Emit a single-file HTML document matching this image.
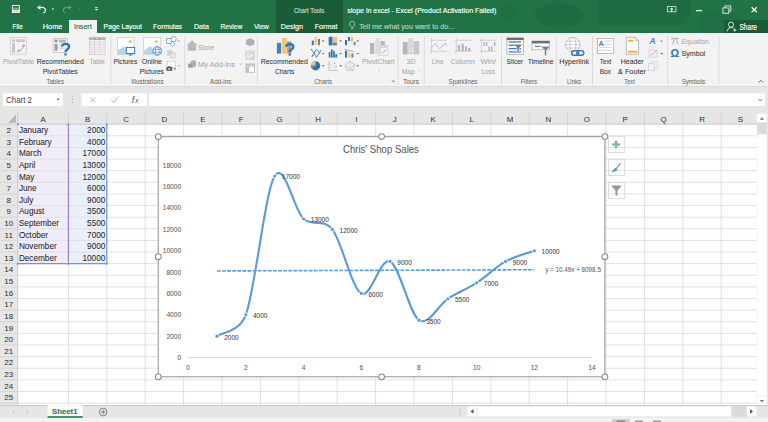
<!DOCTYPE html>
<html><head><meta charset="utf-8"><style>
html,body{margin:0;padding:0;width:768px;height:422px;overflow:hidden;background:#fff}
svg{display:block}
text{font-family:"Liberation Sans",sans-serif}
</style></head><body>
<svg width="768" height="422" viewBox="0 0 768 422">
<rect x="0" y="0" width="768" height="33" fill="#217346" />
<path d="M598 0 H690 Q694 14 684 25 H598 Z" fill="#1e6a41" opacity="0.9"/>
<ellipse cx="559" cy="15.5" rx="25" ry="12" fill="#1e6a41" opacity="0.9"/>
<ellipse cx="508" cy="12" rx="10" ry="8" fill="#1f6d43" opacity="0.7"/>
<ellipse cx="720" cy="22" rx="22" ry="11" fill="#1f6d43" opacity="0.6"/>
<rect x="276" y="0" width="67" height="33" fill="#1b5c38" />
<rect x="724" y="20" width="44" height="13" fill="#1b5c38" />
<path d="M12.4 5.5 H19.4 V12.3 H12.4 Z" fill="none" stroke="#ffffff" stroke-width="0.9"/>
<rect x="12" y="9.6" width="7.8" height="3.1" fill="#ffffff" />
<rect x="14.3" y="10.5" width="0.9" height="1.2" fill="#217346" />
<rect x="16.6" y="10.5" width="0.9" height="1.2" fill="#217346" />
<line x1="13.5" y1="8.2" x2="18.3" y2="8.2" stroke="#ffffff" stroke-width="0.6" />
<path d="M38.6 8.2 Q41 6.6 43.5 7.6 Q46.2 9 45.2 11.4 Q44.6 12.6 43.2 12.8" fill="none" stroke="#ffffff" stroke-width="1.15"/>
<path d="M37 7.6 L40.2 5.2 L40.5 10 Z" fill="#ffffff"/>
<path d="M51.6 8.6 L54.2 8.6 L52.9 9.9 Z" fill="#ffffff"/>
<path d="M70.2 8.2 Q67.8 6.6 65.3 7.6 Q62.6 9 63.6 11.4 Q64.2 12.6 65.6 12.8" fill="none" stroke="#64a07c" stroke-width="1.15"/>
<path d="M71.8 7.6 L68.6 5.2 L68.3 10 Z" fill="#64a07c"/>
<path d="M78.2 8.4 L80.6 8.4 L79.4 9.7 Z" fill="#5c9a75"/>
<line x1="95" y1="7.6" x2="98" y2="7.6" stroke="#ffffff" stroke-width="0.7" />
<path d="M94.8 8.9 L98.2 8.9 L96.5 10.5 Z" fill="#ffffff"/>
<rect x="667.5" y="6.6" width="8.4" height="5.2" fill="none" stroke="#ffffff" stroke-width="0.8" opacity="0.85"/>
<path d="M669.8 9.6 L671.7 7.5 L673.6 9.6 Z" fill="#ffffff"/>
<rect x="671.2" y="9.3" width="1" height="2.5" fill="#ffffff" />
<rect x="695.9" y="10.1" width="6.3" height="1.1" fill="#ffffff" />
<rect x="722.9" y="7.9" width="6" height="5.3" fill="none" stroke="#ffffff" stroke-width="0.8"/>
<path d="M724.8 7.9 V5.9 H730.8 V11.2 H728.9" fill="none" stroke="#ffffff" stroke-width="0.8"/>
<line x1="751.6" y1="7.2" x2="756.8" y2="12.2" stroke="#ffffff" stroke-width="1.2" />
<line x1="756.8" y1="7.2" x2="751.6" y2="12.2" stroke="#ffffff" stroke-width="1.2" />
<circle cx="731" cy="24.6" r="2.6" fill="none" stroke="#ffffff" stroke-width="0.8"/>
<path d="M727.2 31.4 Q727.6 27.6 731 27.4 Q732.6 27.4 733.6 28.3" fill="none" stroke="#ffffff" stroke-width="0.8"/>
<line x1="733.2" y1="30" x2="736.4" y2="30" stroke="#ffffff" stroke-width="0.8" />
<line x1="734.8" y1="28.4" x2="734.8" y2="31.6" stroke="#ffffff" stroke-width="0.8" />
<path d="M351.7 27.3 Q349.6 26 349.6 23.9 Q349.6 21.4 352.2 21.3 Q354.8 21.4 354.8 23.9 Q354.8 26 352.7 27.3 Z" fill="none" stroke="#b7d3c1" stroke-width="0.8"/>
<line x1="351" y1="28.6" x2="353.4" y2="28.6" stroke="#b7d3c1" stroke-width="0.8" />
<text x="12.50" y="29.10" font-size="7.6" fill="#ffffff" stroke="#ffffff" stroke-width="0.15" textLength="10.40" lengthAdjust="spacingAndGlyphs">File</text>
<text x="42.70" y="29.10" font-size="7.6" fill="#ffffff" stroke="#ffffff" stroke-width="0.15" textLength="19.80" lengthAdjust="spacingAndGlyphs">Home</text>
<text x="103.60" y="29.10" font-size="7.6" fill="#ffffff" stroke="#ffffff" stroke-width="0.15" textLength="38.40" lengthAdjust="spacingAndGlyphs">Page Layout</text>
<text x="153.10" y="29.10" font-size="7.6" fill="#ffffff" stroke="#ffffff" stroke-width="0.15" textLength="28.90" lengthAdjust="spacingAndGlyphs">Formulas</text>
<text x="194.00" y="29.10" font-size="7.6" fill="#ffffff" stroke="#ffffff" stroke-width="0.15" textLength="14.80" lengthAdjust="spacingAndGlyphs">Data</text>
<text x="220.40" y="29.10" font-size="7.6" fill="#ffffff" stroke="#ffffff" stroke-width="0.15" textLength="21.80" lengthAdjust="spacingAndGlyphs">Review</text>
<text x="253.90" y="29.10" font-size="7.6" fill="#ffffff" stroke="#ffffff" stroke-width="0.15" textLength="14.80" lengthAdjust="spacingAndGlyphs">View</text>
<text x="280.80" y="29.10" font-size="7.6" fill="#ffffff" stroke="#ffffff" stroke-width="0.15" textLength="22.20" lengthAdjust="spacingAndGlyphs">Design</text>
<text x="314.70" y="29.10" font-size="7.6" fill="#ffffff" stroke="#ffffff" stroke-width="0.15" textLength="22.80" lengthAdjust="spacingAndGlyphs">Format</text>
<rect x="69" y="20" width="28" height="14" fill="#f3f3f3" />
<text x="74.00" y="29.10" font-size="7.6" fill="#217346" stroke="#217346" stroke-width="0.15" textLength="17.60" lengthAdjust="spacingAndGlyphs">Insert</text>
<text x="293.90" y="12.80" font-size="6.8" fill="#c8dccf" stroke="#c8dccf" stroke-width="0.15" textLength="30.30" lengthAdjust="spacingAndGlyphs">Chart Tools</text>
<text x="347.30" y="12.50" font-size="7.6" fill="#ffffff" stroke="#ffffff" stroke-width="0.15" textLength="149.00" lengthAdjust="spacingAndGlyphs">slope in excel - Excel (Product Activation Failed)</text>
<text x="359.20" y="29.20" font-size="7.6" fill="#b7d3c1" stroke="#b7d3c1" stroke-width="0.15" textLength="95.00" lengthAdjust="spacingAndGlyphs">Tell me what you want to do...</text>
<text x="739.50" y="29.50" font-size="8.2" fill="#ffffff" stroke="#ffffff" stroke-width="0.15" textLength="17.50" lengthAdjust="spacingAndGlyphs">Share</text>
<rect x="0" y="33" width="768" height="53" fill="#f3f3f3" />
<text x="2.70" y="63.70" font-size="7.8" fill="#a6a6a6" stroke="#a6a6a6" stroke-width="0.05" textLength="31.40" lengthAdjust="spacingAndGlyphs">PivotTable</text>
<text x="36.70" y="63.70" font-size="7.8" fill="#303030" stroke="#303030" stroke-width="0.05" textLength="47.10" lengthAdjust="spacingAndGlyphs">Recommended</text>
<text x="42.70" y="73.70" font-size="7.8" fill="#303030" stroke="#303030" stroke-width="0.05" textLength="35.10" lengthAdjust="spacingAndGlyphs">PivotTables</text>
<text x="89.50" y="63.70" font-size="7.8" fill="#a6a6a6" stroke="#a6a6a6" stroke-width="0.05" textLength="15.30" lengthAdjust="spacingAndGlyphs">Table</text>
<text x="46.40" y="83.90" font-size="7.8" fill="#5e5e5e" stroke="#5e5e5e" stroke-width="0.03" textLength="17.60" lengthAdjust="spacingAndGlyphs">Tables</text>
<text x="113.50" y="63.70" font-size="7.8" fill="#303030" stroke="#303030" stroke-width="0.05" textLength="23.80" lengthAdjust="spacingAndGlyphs">Pictures</text>
<text x="141.80" y="63.70" font-size="7.8" fill="#303030" stroke="#303030" stroke-width="0.05" textLength="20.20" lengthAdjust="spacingAndGlyphs">Online</text>
<text x="139.70" y="73.70" font-size="7.8" fill="#303030" stroke="#303030" stroke-width="0.05" textLength="24.30" lengthAdjust="spacingAndGlyphs">Pictures</text>
<text x="131.30" y="83.90" font-size="7.8" fill="#5e5e5e" stroke="#5e5e5e" stroke-width="0.03" textLength="32.30" lengthAdjust="spacingAndGlyphs">Illustrations</text>
<text x="198.00" y="49.90" font-size="7.8" fill="#a6a6a6" stroke="#a6a6a6" stroke-width="0.05" textLength="16.10" lengthAdjust="spacingAndGlyphs">Store</text>
<text x="198.00" y="67.10" font-size="7.8" fill="#a6a6a6" stroke="#a6a6a6" stroke-width="0.05" textLength="37.00" lengthAdjust="spacingAndGlyphs">My Add-ins</text>
<text x="210.10" y="84.00" font-size="7.8" fill="#5e5e5e" stroke="#5e5e5e" stroke-width="0.03" textLength="21.20" lengthAdjust="spacingAndGlyphs">Add-ins</text>
<text x="260.70" y="63.70" font-size="7.8" fill="#303030" stroke="#303030" stroke-width="0.05" textLength="47.10" lengthAdjust="spacingAndGlyphs">Recommended</text>
<text x="275.00" y="73.70" font-size="7.8" fill="#303030" stroke="#303030" stroke-width="0.05" textLength="19.20" lengthAdjust="spacingAndGlyphs">Charts</text>
<text x="362.00" y="63.70" font-size="7.8" fill="#a6a6a6" stroke="#a6a6a6" stroke-width="0.05" textLength="32.40" lengthAdjust="spacingAndGlyphs">PivotChart</text>
<text x="314.20" y="83.90" font-size="7.8" fill="#5e5e5e" stroke="#5e5e5e" stroke-width="0.03" textLength="17.80" lengthAdjust="spacingAndGlyphs">Charts</text>
<text x="406.50" y="63.70" font-size="7.8" fill="#a6a6a6" stroke="#a6a6a6" stroke-width="0.05" textLength="9.10" lengthAdjust="spacingAndGlyphs">3D</text>
<text x="402.00" y="73.70" font-size="7.8" fill="#a6a6a6" stroke="#a6a6a6" stroke-width="0.05" textLength="12.50" lengthAdjust="spacingAndGlyphs">Map</text>
<text x="403.00" y="83.90" font-size="7.8" fill="#5e5e5e" stroke="#5e5e5e" stroke-width="0.03" textLength="16.00" lengthAdjust="spacingAndGlyphs">Tours</text>
<text x="431.70" y="63.70" font-size="7.8" fill="#a6a6a6" stroke="#a6a6a6" stroke-width="0.05" textLength="12.20" lengthAdjust="spacingAndGlyphs">Line</text>
<text x="450.40" y="63.70" font-size="7.8" fill="#a6a6a6" stroke="#a6a6a6" stroke-width="0.05" textLength="24.60" lengthAdjust="spacingAndGlyphs">Column</text>
<text x="480.40" y="63.70" font-size="7.8" fill="#a6a6a6" stroke="#a6a6a6" stroke-width="0.05" textLength="15.60" lengthAdjust="spacingAndGlyphs">Win/</text>
<text x="481.40" y="73.70" font-size="7.8" fill="#a6a6a6" stroke="#a6a6a6" stroke-width="0.05" textLength="13.60" lengthAdjust="spacingAndGlyphs">Loss</text>
<text x="448.60" y="83.90" font-size="7.8" fill="#5e5e5e" stroke="#5e5e5e" stroke-width="0.03" textLength="28.80" lengthAdjust="spacingAndGlyphs">Sparklines</text>
<text x="506.60" y="63.70" font-size="7.8" fill="#303030" stroke="#303030" stroke-width="0.05" textLength="16.40" lengthAdjust="spacingAndGlyphs">Slicer</text>
<text x="527.70" y="63.70" font-size="7.8" fill="#303030" stroke="#303030" stroke-width="0.05" textLength="25.80" lengthAdjust="spacingAndGlyphs">Timeline</text>
<text x="520.70" y="83.90" font-size="7.8" fill="#5e5e5e" stroke="#5e5e5e" stroke-width="0.03" textLength="16.40" lengthAdjust="spacingAndGlyphs">Filters</text>
<text x="559.30" y="63.70" font-size="7.8" fill="#303030" stroke="#303030" stroke-width="0.05" textLength="29.80" lengthAdjust="spacingAndGlyphs">Hyperlink</text>
<text x="567.00" y="83.90" font-size="7.8" fill="#5e5e5e" stroke="#5e5e5e" stroke-width="0.03" textLength="14.10" lengthAdjust="spacingAndGlyphs">Links</text>
<text x="599.70" y="63.70" font-size="7.8" fill="#303030" stroke="#303030" stroke-width="0.05" textLength="11.70" lengthAdjust="spacingAndGlyphs">Text</text>
<text x="599.70" y="73.70" font-size="7.8" fill="#303030" stroke="#303030" stroke-width="0.05" textLength="11.30" lengthAdjust="spacingAndGlyphs">Box</text>
<text x="620.80" y="63.70" font-size="7.8" fill="#303030" stroke="#303030" stroke-width="0.05" textLength="22.90" lengthAdjust="spacingAndGlyphs">Header</text>
<text x="618.00" y="73.70" font-size="7.8" fill="#303030" stroke="#303030" stroke-width="0.05" textLength="28.00" lengthAdjust="spacingAndGlyphs">&amp; Footer</text>
<text x="624.30" y="83.90" font-size="7.8" fill="#5e5e5e" stroke="#5e5e5e" stroke-width="0.03" textLength="10.50" lengthAdjust="spacingAndGlyphs">Text</text>
<text x="681.40" y="44.00" font-size="7.8" fill="#a6a6a6" stroke="#a6a6a6" stroke-width="0.05" textLength="27.35" lengthAdjust="spacingAndGlyphs">Equation</text>
<text x="681.40" y="55.90" font-size="7.8" fill="#303030" stroke="#303030" stroke-width="0.05" textLength="23.80" lengthAdjust="spacingAndGlyphs">Symbol</text>
<text x="681.70" y="83.90" font-size="7.8" fill="#5e5e5e" stroke="#5e5e5e" stroke-width="0.03" textLength="23.40" lengthAdjust="spacingAndGlyphs">Symbols</text>
<line x1="110.8" y1="36" x2="110.8" y2="84.5" stroke="#dadada" stroke-width="1" />
<line x1="184.8" y1="36" x2="184.8" y2="84.5" stroke="#dadada" stroke-width="1" />
<line x1="257.4" y1="36" x2="257.4" y2="84.5" stroke="#dadada" stroke-width="1" />
<line x1="398" y1="36" x2="398" y2="84.5" stroke="#dadada" stroke-width="1" />
<line x1="424.2" y1="36" x2="424.2" y2="84.5" stroke="#dadada" stroke-width="1" />
<line x1="501.5" y1="36" x2="501.5" y2="84.5" stroke="#dadada" stroke-width="1" />
<line x1="556.3" y1="36" x2="556.3" y2="84.5" stroke="#dadada" stroke-width="1" />
<line x1="592.5" y1="36" x2="592.5" y2="84.5" stroke="#dadada" stroke-width="1" />
<line x1="667.7" y1="36" x2="667.7" y2="84.5" stroke="#dadada" stroke-width="1" />
<line x1="718.9" y1="36" x2="718.9" y2="84.5" stroke="#dadada" stroke-width="1" />
<rect x="10.5" y="37.6" width="15.8" height="16.6" fill="#f6f1f6" stroke="#c9c5c9" stroke-width="0.7" />
<rect x="12.1" y="39.3" width="2.9" height="2.7" fill="#c9c6c9" />
<rect x="16.1" y="39.3" width="8.8" height="2.7" fill="#c9c6c9" />
<rect x="12.1" y="43.2" width="2.9" height="9.6" fill="#c9c6c9" />
<path d="M18.3 50.8 Q22.5 50.6 23.7 45.6" fill="none" stroke="#b3b0b3" stroke-width="1.1"/>
<path d="M16.8 50.9 L19.2 48.8 L19.2 53 Z" fill="#b3b0b3"/><path d="M23.8 44 L21.7 46.4 L25.9 46.4 Z" fill="#b3b0b3"/>
<rect x="53.1" y="38.4" width="14.3" height="14.1" fill="#f4f4f4" stroke="#bdbdbd" stroke-width="0.7" />
<rect x="54.6" y="39.6" width="2.9" height="2.9" fill="#9a9a9a" />
<rect x="59" y="39.6" width="6.8" height="2.9" fill="#b5b5b5" />
<rect x="54.6" y="44" width="2.9" height="6.7" fill="#9a9a9a" />
<rect x="59" y="44.5" width="6.5" height="1.2" fill="#d5d5d5" />
<rect x="59" y="47.5" width="6.5" height="1.2" fill="#d5d5d5" />
<path d="M62.2 46.6 Q62 43.9 65.6 43.9 Q69.2 43.9 69.2 46.6 Q69.2 48.4 67 49.5 Q65.5 50.3 65.5 52" fill="none" stroke="#2e75b6" stroke-width="2.3"/>
<rect x="64.3" y="53.2" width="2.4" height="2.3" rx="0.6" fill="#2e75b6"/>
<rect x="89.3" y="37.5" width="15.8" height="17" fill="#f6eff6" stroke="#c9c5c9" stroke-width="0.7" />
<rect x="89.3" y="37.5" width="15.8" height="2.4" fill="#a6a6a6" />
<rect x="91.2" y="38.3" width="1.6" height="0.8" fill="#f0f0f0" />
<rect x="96.3" y="38.3" width="1.6" height="0.8" fill="#f0f0f0" />
<rect x="101.4" y="38.3" width="1.6" height="0.8" fill="#f0f0f0" />
<line x1="89.6" y1="42.2" x2="104.8" y2="42.2" stroke="#d8cfd8" stroke-width="0.7" />
<line x1="89.6" y1="44.6" x2="104.8" y2="44.6" stroke="#d8cfd8" stroke-width="0.7" />
<line x1="89.6" y1="47" x2="104.8" y2="47" stroke="#d8cfd8" stroke-width="0.7" />
<line x1="89.6" y1="49.4" x2="104.8" y2="49.4" stroke="#d8cfd8" stroke-width="0.7" />
<line x1="89.6" y1="51.8" x2="104.8" y2="51.8" stroke="#d8cfd8" stroke-width="0.7" />
<line x1="94.5" y1="39.9" x2="94.5" y2="54.5" stroke="#d8cfd8" stroke-width="0.7" />
<line x1="99.6" y1="39.9" x2="99.6" y2="54.5" stroke="#d8cfd8" stroke-width="0.7" />
<rect x="117.4" y="37.5" width="16.599999999999994" height="16.8" fill="#ffffff" stroke="#c8c8c8" stroke-width="0.7" />
<circle cx="130.2" cy="41.6" r="1.45" fill="#f0b44c"/>
<path d="M118.0 53.9 L118.0 50.2 L124.0 46.2 L128.4 50.2 L128.4 53.9 Z" fill="#bcd2ea"/>
<rect x="126.3" y="47.4" width="8.4" height="6.2" fill="#ffffff" stroke="#2e75b6" stroke-width="0.9" />
<line x1="130.5" y1="53.6" x2="130.5" y2="55" stroke="#2e75b6" stroke-width="0.8" />
<line x1="128.8" y1="55.2" x2="132.2" y2="55.2" stroke="#2e75b6" stroke-width="0.8" />
<rect x="143.5" y="37.5" width="17.19999999999999" height="16.8" fill="#ffffff" stroke="#c8c8c8" stroke-width="0.7" />
<circle cx="156.3" cy="41.6" r="1.45" fill="#f0b44c"/>
<path d="M144.1 53.9 L144.1 50.2 L150.1 46.2 L154.5 50.2 L154.5 53.9 Z" fill="#bcd2ea"/>
<circle cx="157.2" cy="50.9" r="4.3" fill="#ffffff" stroke="#3f80c0" stroke-width="0.8"/>
<ellipse cx="157.2" cy="50.9" rx="1.9" ry="4.3" fill="none" stroke="#3f80c0" stroke-width="0.7"/>
<line x1="152.9" y1="49.4" x2="161.5" y2="49.4" stroke="#3f80c0" stroke-width="0.6" />
<line x1="152.9" y1="52.4" x2="161.5" y2="52.4" stroke="#3f80c0" stroke-width="0.6" />
<rect x="166.6" y="38.7" width="4.8" height="4.8" fill="#ffffff" stroke="#5b9bd5" stroke-width="0.8" />
<circle cx="173.6" cy="39.2" r="2.6" fill="#ffffff" stroke="#5b9bd5" stroke-width="0.8"/>
<path d="M172.6 41.6 L175 43.9 L172.6 46.2 L170.2 43.9 Z" fill="#ffffff" stroke="#5b9bd5" stroke-width="0.8"/>
<path d="M177.7 40.8 L179.7 40.8 L178.7 41.8 Z" fill="#444"/>
<path d="M166.5 50.5 L172 50.5 L174 53 L172 55.5 L166.5 55.5 L168 53 Z" fill="#d4d0d4"/>
<rect x="170.5" y="53.2" width="5.4" height="4.7" fill="#ece6ec" stroke="#c9c5c9" stroke-width="0.6" />
<rect x="167.6" y="61.4" width="7.8" height="5.9" fill="#ffffff" stroke="#c6c6c6" stroke-width="0.6" />
<rect x="166.4" y="67" width="5.9" height="3.8" fill="#555555" />
<rect x="168" y="66.2" width="2.6" height="1" fill="#555555" />
<circle cx="169.35" cy="68.9" r="1.1" fill="#ffffff"/><circle cx="169.35" cy="68.9" r="0.6" fill="#555"/>
<circle cx="174.9" cy="68.8" r="0.9" fill="#2e75b6"/>
<path d="M177.9 65.6 L179.9 65.6 L178.9 66.6 Z" fill="#444"/>
<path d="M188 43.4 L196 43.4 L196 50.4 L188 50.4 Z M189.8 43.4 Q190 40.8 192 40.8 Q194 40.8 194.2 43.4" fill="#b8b8b8" stroke="#b8b8b8" stroke-width="0.5"/>
<path d="M190.5 61.2 L194 60 L196 61 L196 66.5 L192.5 67.8 L190.5 66.8 Z" fill="#b0b0b0"/><rect x="188" y="63.6" width="4" height="4" fill="#9e9e9e"/>
<path d="M239.6 63.8 L241.6 63.8 L240.6 64.8 Z" fill="#888"/>
<path d="M246 40 L250 38.3 L254.3 40 L254.3 44.5 L250 46 L246 44.5 Z" fill="#b0b0b0"/>
<rect x="245.4" y="50.4" width="9.6" height="9.5" fill="#d6d6d6" />
<path d="M248 52 L248 58 L252.5 55.6 L250 54.4" fill="none" stroke="#ffffff" stroke-width="1"/>
<rect x="245.4" y="63.4" width="9.6" height="9.4" fill="#c3c3c3" />
<rect x="249" y="67" width="5" height="4.8" fill="#ffffff" />
<rect x="250.8" y="65" width="1.4" height="2.5" fill="#ffffff" />
<line x1="246.5" y1="66" x2="248.5" y2="66" stroke="#e8e8e8" stroke-width="0.6" />
<rect x="287.2" y="41.4" width="4.2" height="12.2" fill="#9c9c9c" />
<rect x="276.9" y="42.8" width="4.2" height="10.8" fill="#3f7fc0" />
<rect x="282" y="38" width="4.8" height="15.6" fill="#f2c46d" />
<path d="M286.4 46.8 Q286.2 44.1 289.8 44.1 Q293.4 44.1 293.4 46.8 Q293.4 48.6 291.2 49.7 Q289.7 50.5 289.7 52.2" fill="none" stroke="#2e75b6" stroke-width="2.3"/>
<rect x="288.5" y="53.4" width="2.4" height="2.3" rx="0.6" fill="#2e75b6"/>
<rect x="311.8" y="40.6" width="1.9" height="4.6" fill="#2e75b6" />
<rect x="314.6" y="36.8" width="2.1" height="8.4" fill="#f2c46d" />
<rect x="318" y="39" width="2" height="6.2" fill="#7f7f7f" />
<path d="M321.90 40.60 L324.50 40.60 L323.20 42.00 Z" fill="#505050"/>
<rect x="328.7" y="36.8" width="3.8" height="8.6" fill="#2e75b6" />
<rect x="333" y="36.8" width="4" height="5.6" fill="#f2c46d" />
<rect x="333" y="42.6" width="4" height="2.8" fill="#7f7f7f" />
<path d="M339.40 40.60 L342.00 40.60 L340.70 42.00 Z" fill="#505050"/>
<rect x="345" y="40" width="2" height="5.2" fill="#2e75b6" />
<rect x="348" y="37" width="2" height="4" fill="#2e75b6" />
<rect x="351" y="37" width="2" height="4.5" fill="#f2c46d" />
<rect x="353.6" y="42" width="2" height="3.2" fill="#7f7f7f" />
<path d="M356.50 40.60 L359.10 40.60 L357.80 42.00 Z" fill="#505050"/>
<path d="M311.5 49.5 L314 53 L311.8 57 M316.5 49 L314 53 L316.5 57 L319.5 53 L317 49.5 M319.5 53 L321 50" fill="none" stroke="#2e75b6" stroke-width="0.8"/>
<circle cx="311.5" cy="49.5" r="0.7" fill="#7f7f7f"/>
<circle cx="316.5" cy="57" r="0.7" fill="#7f7f7f"/>
<circle cx="319.5" cy="53" r="0.7" fill="#7f7f7f"/>
<circle cx="313" cy="55.5" r="0.7" fill="#7f7f7f"/>
<path d="M321.90 52.90 L324.50 52.90 L323.20 54.30 Z" fill="#505050"/>
<rect x="328.7" y="52.1" width="1.7" height="5.5" fill="#2e75b6" />
<rect x="330.9" y="49.3" width="1.7" height="8.3" fill="#2e75b6" />
<rect x="333.1" y="50.9" width="1.7" height="6.7" fill="#2e75b6" />
<rect x="335.3" y="54.1" width="1.7" height="3.5" fill="#2e75b6" />
<path d="M339.40 52.90 L342.00 52.90 L340.70 54.30 Z" fill="#505050"/>
<rect x="345" y="50.8" width="2" height="6.8" fill="#2e75b6" />
<rect x="348.2" y="52.5" width="2" height="5.1" fill="#f2c46d" />
<rect x="351.4" y="53.5" width="2" height="4.1" fill="#7f7f7f" />
<path d="M344.5 49.2 L349 50.4 L353.5 51.6" fill="none" stroke="#7f7f7f" stroke-width="0.6"/>
<path d="M356.50 52.90 L359.10 52.90 L357.80 54.30 Z" fill="#505050"/>
<circle cx="315.6" cy="65.8" r="4.6" fill="#2e75b6"/>
<path d="M315.6 65.8 L311 65.8 A4.6 4.6 0 0 1 315.6 61.2 Z" fill="#f2c46d"/>
<path d="M315.6 65.8 L311 65.8 A4.6 4.6 0 0 0 312.4 69.1 Z" fill="#7f7f7f"/>
<path d="M321.90 65.30 L324.50 65.30 L323.20 66.70 Z" fill="#505050"/>
<path d="M328.9 61.2 L328.9 70.4 L337.6 70.4" fill="none" stroke="#a6a6a6" stroke-width="0.6"/>
<circle cx="330.8" cy="67" r="0.6" fill="#5b9bd5"/>
<circle cx="331" cy="64.5" r="0.6" fill="#f2c46d"/>
<circle cx="333.4" cy="65.8" r="0.6" fill="#f2c46d"/>
<circle cx="334.6" cy="63.3" r="0.6" fill="#5b9bd5"/>
<circle cx="336" cy="66.4" r="0.6" fill="#5b9bd5"/>
<circle cx="335" cy="68.6" r="0.6" fill="#f2c46d"/>
<path d="M339.40 65.30 L342.00 65.30 L340.70 66.70 Z" fill="#505050"/>
<path d="M350 61 L355 64.8 L353.2 70.4 L346.8 70.4 L345 64.8 Z M350 61 L350 65.8 M355 64.8 L346.8 70.4 M345 64.8 L353.2 70.4" fill="none" stroke="#b3b3b3" stroke-width="0.6"/>
<path d="M356.50 65.30 L359.10 65.30 L357.80 66.70 Z" fill="#505050"/>
<rect x="375.3" y="38.3" width="4.2" height="15.6" fill="#dcdcdc" />
<rect x="370" y="43" width="4.3" height="10.9" fill="#b5b5b5" />
<rect x="380.5" y="41.1" width="4.3" height="5" fill="#b5b5b5" />
<rect x="378.1" y="45.2" width="10" height="10.1" fill="#f6f1f6" stroke="#c9c5c9" stroke-width="0.6" />
<rect x="379.3" y="46.4" width="7.6" height="1.2" fill="#c9c6c9" />
<rect x="379.3" y="46.4" width="1.2" height="7.6" fill="#c9c6c9" />
<path d="M382 53 Q385.6 52.6 386 49" fill="none" stroke="#b3b0b3" stroke-width="0.8"/>
<path d="M378 70 L380 70 L379 71 Z" fill="#b0b0b0"/>
<path d="M391.8 80.5 L394.3 80.5 L394.3 83 Z M391.6 80.4 L392.5 80.4 L392.5 81.3 L391.6 81.3Z" fill="#888"/>
<rect x="402.8" y="42" width="4.8" height="12.4" fill="#b8b8b8" />
<rect x="408" y="38.3" width="5" height="16" fill="#dadada" />
<rect x="413.5" y="41" width="5.8" height="13.4" fill="#c8c8c8" />
<circle cx="411.2" cy="50" r="3.6" fill="#ececec" stroke="#b8b8b8" stroke-width="0.6"/>
<line x1="407.6" y1="50" x2="414.8" y2="50" stroke="#b8b8b8" stroke-width="0.5" />
<line x1="411.2" y1="46.4" x2="411.2" y2="53.6" stroke="#b8b8b8" stroke-width="0.5" />
<path d="M418.3 70 L420.3 70 L419.3 71 Z" fill="#b0b0b0"/>
<line x1="431.5" y1="37.9" x2="431.5" y2="53.7" stroke="#c4c4c4" stroke-width="0.7" />
<line x1="429.4" y1="40.3" x2="446.7" y2="40.3" stroke="#c4c4c4" stroke-width="0.7" />
<line x1="429.4" y1="51.3" x2="446.7" y2="51.3" stroke="#c4c4c4" stroke-width="0.7" />
<path d="M431.5 47.7 L435 43.6 L439.5 49 L445 43 L446.7 46" fill="none" stroke="#b3b3b3" stroke-width="0.8"/>
<line x1="456.3" y1="37.9" x2="456.3" y2="53.7" stroke="#c4c4c4" stroke-width="0.7" />
<line x1="454.2" y1="40.3" x2="471.8" y2="40.3" stroke="#c4c4c4" stroke-width="0.7" />
<line x1="454.2" y1="51.3" x2="471.8" y2="51.3" stroke="#c4c4c4" stroke-width="0.7" />
<rect x="457.8" y="45" width="2.1999999999999886" height="6" fill="#b5b5b5" />
<rect x="461.5" y="43.8" width="2.3000000000000114" height="7.200000000000003" fill="#b5b5b5" />
<rect x="465" y="46.3" width="2" height="4.700000000000003" fill="#b5b5b5" />
<rect x="468.2" y="47.8" width="2.3000000000000114" height="3.200000000000003" fill="#b5b5b5" />
<line x1="481.4" y1="37.9" x2="481.4" y2="53.7" stroke="#c4c4c4" stroke-width="0.7" />
<line x1="479.3" y1="40.3" x2="497" y2="40.3" stroke="#c4c4c4" stroke-width="0.7" />
<line x1="479.3" y1="51.3" x2="497" y2="51.3" stroke="#c4c4c4" stroke-width="0.7" />
<rect x="483.3" y="42" width="1.5" height="4" fill="#b5b5b5" />
<rect x="485.8" y="42" width="1.5" height="4" fill="#b5b5b5" />
<rect x="488.4" y="46.5" width="1.5" height="4.5" fill="#b5b5b5" />
<rect x="491" y="46.5" width="1.5" height="4.5" fill="#b5b5b5" />
<rect x="494" y="42" width="1.5" height="4" fill="#b5b5b5" />
<rect x="506.9" y="38" width="16.6" height="16.3" fill="#ffffff" stroke="#9f9f9f" stroke-width="0.7" />
<rect x="506.7" y="37.8" width="17" height="2.3" fill="#6f6f6f" />
<rect x="508.6" y="41.3" width="12.5" height="1.3" fill="#3f7fc0" />
<rect x="508.6" y="44.699999999999996" width="12.5" height="1.3" fill="#3f7fc0" />
<rect x="508.6" y="48.0" width="12.5" height="1.3" fill="#3f7fc0" />
<rect x="508.6" y="51.3" width="12.5" height="1.3" fill="#3f7fc0" />
<path d="M513.6 44.2 L522.8 44.2 L519.3 48 L519.3 53.2 L517.1 53.2 L517.1 48 Z" fill="#7f7f7f" stroke="#ffffff" stroke-width="0.5"/>
<rect x="532" y="41" width="17.4" height="8.8" fill="#ffffff" stroke="#9f9f9f" stroke-width="0.7" />
<rect x="531.9" y="41" width="17.6" height="2.4" fill="#6f6f6f" />
<rect x="535" y="45.8" width="6.2" height="1.1" fill="#3f7fc0" />
<path d="M540.8 46.2 L550.3 46.2 L546.6 50.3 L546.6 55.8 L544.5 55.8 L544.5 50.3 Z" fill="#7f7f7f" stroke="#ffffff" stroke-width="0.5"/>
<circle cx="572.8" cy="44.6" r="7.2" fill="#ffffff" stroke="#a0a0a0" stroke-width="0.6"/>
<ellipse cx="572.8" cy="44.6" rx="3.1" ry="7.2" fill="none" stroke="#a8a8a8" stroke-width="0.6"/>
<line x1="566.5" y1="41.2" x2="579.0999999999999" y2="41.2" stroke="#a8a8a8" stroke-width="0.55" />
<line x1="565.5999999999999" y1="44.6" x2="580.0" y2="44.6" stroke="#a8a8a8" stroke-width="0.55" />
<line x1="566.5" y1="48" x2="579.0999999999999" y2="48" stroke="#a8a8a8" stroke-width="0.55" />
<rect x="571.6" y="50.6" width="7" height="4.6" rx="2.3" fill="none" stroke="#2e75b6" stroke-width="1.4"/>
<rect x="576.8" y="50.6" width="7" height="4.6" rx="2.3" fill="none" stroke="#2e75b6" stroke-width="1.4"/>
<rect x="597.4" y="38.4" width="16.4" height="15" fill="#ffffff" stroke="#9f9f9f" stroke-width="0.7" />
<text x="598.6" y="46" font-size="7.4" font-weight="bold" fill="#3f7fc0">A</text>
<line x1="604.5" y1="41.1" x2="612.2" y2="41.1" stroke="#c8c8c8" stroke-width="0.8" />
<line x1="604.5" y1="44.4" x2="612.2" y2="44.4" stroke="#c8c8c8" stroke-width="0.8" />
<line x1="599" y1="47.3" x2="612.2" y2="47.3" stroke="#c8c8c8" stroke-width="0.8" />
<line x1="599" y1="50.3" x2="612.2" y2="50.3" stroke="#c8c8c8" stroke-width="0.8" />
<path d="M626.3 37.4 L635.3 37.4 L638.5 40.6 L638.5 54.3 L626.3 54.3 Z" fill="#ffffff" stroke="#9f9f9f" stroke-width="0.7"/>
<path d="M635.3 37.4 L635.3 40.6 L638.5 40.6" fill="none" stroke="#9f9f9f" stroke-width="0.6"/>
<rect x="628.1" y="39.6" width="5.2" height="2.2" fill="#eeb550" />
<rect x="628.1" y="50.6" width="9" height="2.3" fill="#eeb550" />
<text x="649.6" y="44.4" font-size="8.4" font-style="italic" font-weight="bold" fill="#3f7fc0">A</text>
<path d="M660.20 40.70 L662.80 40.70 L661.50 42.10 Z" fill="#505050"/>
<path d="M649.3 49.8 L655 49.8 L657 51.8 L657 57.2 L649.3 57.2 Z" fill="#f4f0f4" stroke="#c6c2c6" stroke-width="0.6"/>
<line x1="650.5" y1="56" x2="656.8" y2="50" stroke="#a8a8a8" stroke-width="0.8" />
<path d="M660.50 53.00 L663.10 53.00 L661.80 54.40 Z" fill="#505050"/>
<rect x="651" y="61.2" width="6.4" height="7.4" fill="#f4f0f4" stroke="#c9c5c9" stroke-width="0.6" />
<rect x="648.6" y="63.6" width="5.8" height="6.8" fill="#f4f0f4" stroke="#c9c5c9" stroke-width="0.6" />
<path d="M671.2 39.6 Q671.8 38.4 673 38.4 L678.8 38.4 M673.8 38.4 Q674 42.2 672.4 44.4 M676.6 38.4 Q676.4 42.8 678.2 44.4" fill="none" stroke="#b0b0b0" stroke-width="1"/>
<path d="M713.5 41.2 L715.3 41.2 L714.4 42.1 Z" fill="#b8b8b8"/>
<text x="670.6" y="57.2" font-family="Liberation Serif" font-size="10.5" font-weight="bold" fill="#2e75b6" textLength="8.6" lengthAdjust="spacingAndGlyphs">Ω</text>
<path d="M758.6 82.6 L760.8 80.4 L763 82.6" fill="none" stroke="#555" stroke-width="0.9"/>
<rect x="0" y="86" width="768" height="27" fill="#e6e6e6" />
<line x1="0" y1="86.5" x2="768" y2="86.5" stroke="#dadada" stroke-width="1" />
<rect x="3" y="93.5" width="60" height="12.5" fill="#ffffff" />
<text x="6.00" y="103.00" font-size="8.2" fill="#444444" stroke="#444444" stroke-width="0.02" textLength="26.00" lengthAdjust="spacingAndGlyphs">Chart 2</text>
<rect x="81.5" y="93.5" width="65.5" height="12.5" fill="#ffffff" />
<rect x="149" y="93.5" width="616" height="12.5" fill="#ffffff" />
<path d="M56.5 98.7 L59.7 98.7 L58.1 100.3 Z" fill="#444"/>
<rect x="71.9" y="96.0" width="1" height="1" fill="#a8a8a8" />
<rect x="71.9" y="98.9" width="1" height="1" fill="#a8a8a8" />
<rect x="71.9" y="101.8" width="1" height="1" fill="#a8a8a8" />
<line x1="90.2" y1="97.3" x2="95.2" y2="102.3" stroke="#a6a6a6" stroke-width="0.8" />
<line x1="95.2" y1="97.3" x2="90.2" y2="102.3" stroke="#a6a6a6" stroke-width="0.8" />
<path d="M111.3 99.8 L113.6 102.6 L118.4 96.6" fill="none" stroke="#a6a6a6" stroke-width="0.9"/>
<text x="131.8" y="102.6" font-family="Liberation Serif" font-style="italic" font-size="9" fill="#555">f</text>
<text x="135.2" y="102.6" font-family="Liberation Serif" font-style="italic" font-size="6.5" fill="#555">x</text>
<path d="M758.6 99 L760.6 101 L762.6 99" fill="none" stroke="#555" stroke-width="0.8"/>
<rect x="0" y="113.0" width="756.8" height="11.200000000000003" fill="#e6e6e6" />
<rect x="0" y="124.2" width="17.7" height="281.0" fill="#e6e6e6" />
<rect x="17.7" y="124.2" width="739.0999999999999" height="281.0" fill="#ffffff" />
<rect x="17.7" y="124.2" width="50.7" height="139.44" fill="#f1ecf9" />
<rect x="68.4" y="124.2" width="38.39999999999999" height="139.44" fill="#e9f0fa" />
<line x1="17.7" y1="135.82" x2="756.8" y2="135.82" stroke="#e0e0e0" stroke-width="1" />
<line x1="0" y1="135.82" x2="17.7" y2="135.82" stroke="#d6d6d6" stroke-width="1" />
<line x1="17.7" y1="147.44" x2="756.8" y2="147.44" stroke="#e0e0e0" stroke-width="1" />
<line x1="0" y1="147.44" x2="17.7" y2="147.44" stroke="#d6d6d6" stroke-width="1" />
<line x1="17.7" y1="159.06" x2="756.8" y2="159.06" stroke="#e0e0e0" stroke-width="1" />
<line x1="0" y1="159.06" x2="17.7" y2="159.06" stroke="#d6d6d6" stroke-width="1" />
<line x1="17.7" y1="170.68" x2="756.8" y2="170.68" stroke="#e0e0e0" stroke-width="1" />
<line x1="0" y1="170.68" x2="17.7" y2="170.68" stroke="#d6d6d6" stroke-width="1" />
<line x1="17.7" y1="182.3" x2="756.8" y2="182.3" stroke="#e0e0e0" stroke-width="1" />
<line x1="0" y1="182.3" x2="17.7" y2="182.3" stroke="#d6d6d6" stroke-width="1" />
<line x1="17.7" y1="193.92000000000002" x2="756.8" y2="193.92000000000002" stroke="#e0e0e0" stroke-width="1" />
<line x1="0" y1="193.92000000000002" x2="17.7" y2="193.92000000000002" stroke="#d6d6d6" stroke-width="1" />
<line x1="17.7" y1="205.54" x2="756.8" y2="205.54" stroke="#e0e0e0" stroke-width="1" />
<line x1="0" y1="205.54" x2="17.7" y2="205.54" stroke="#d6d6d6" stroke-width="1" />
<line x1="17.7" y1="217.16" x2="756.8" y2="217.16" stroke="#e0e0e0" stroke-width="1" />
<line x1="0" y1="217.16" x2="17.7" y2="217.16" stroke="#d6d6d6" stroke-width="1" />
<line x1="17.7" y1="228.78" x2="756.8" y2="228.78" stroke="#e0e0e0" stroke-width="1" />
<line x1="0" y1="228.78" x2="17.7" y2="228.78" stroke="#d6d6d6" stroke-width="1" />
<line x1="17.7" y1="240.39999999999998" x2="756.8" y2="240.39999999999998" stroke="#e0e0e0" stroke-width="1" />
<line x1="0" y1="240.39999999999998" x2="17.7" y2="240.39999999999998" stroke="#d6d6d6" stroke-width="1" />
<line x1="17.7" y1="252.01999999999998" x2="756.8" y2="252.01999999999998" stroke="#e0e0e0" stroke-width="1" />
<line x1="0" y1="252.01999999999998" x2="17.7" y2="252.01999999999998" stroke="#d6d6d6" stroke-width="1" />
<line x1="17.7" y1="263.64" x2="756.8" y2="263.64" stroke="#e0e0e0" stroke-width="1" />
<line x1="0" y1="263.64" x2="17.7" y2="263.64" stroke="#d6d6d6" stroke-width="1" />
<line x1="17.7" y1="275.26" x2="756.8" y2="275.26" stroke="#e0e0e0" stroke-width="1" />
<line x1="0" y1="275.26" x2="17.7" y2="275.26" stroke="#d6d6d6" stroke-width="1" />
<line x1="17.7" y1="286.88" x2="756.8" y2="286.88" stroke="#e0e0e0" stroke-width="1" />
<line x1="0" y1="286.88" x2="17.7" y2="286.88" stroke="#d6d6d6" stroke-width="1" />
<line x1="17.7" y1="298.5" x2="756.8" y2="298.5" stroke="#e0e0e0" stroke-width="1" />
<line x1="0" y1="298.5" x2="17.7" y2="298.5" stroke="#d6d6d6" stroke-width="1" />
<line x1="17.7" y1="310.12" x2="756.8" y2="310.12" stroke="#e0e0e0" stroke-width="1" />
<line x1="0" y1="310.12" x2="17.7" y2="310.12" stroke="#d6d6d6" stroke-width="1" />
<line x1="17.7" y1="321.74" x2="756.8" y2="321.74" stroke="#e0e0e0" stroke-width="1" />
<line x1="0" y1="321.74" x2="17.7" y2="321.74" stroke="#d6d6d6" stroke-width="1" />
<line x1="17.7" y1="333.36" x2="756.8" y2="333.36" stroke="#e0e0e0" stroke-width="1" />
<line x1="0" y1="333.36" x2="17.7" y2="333.36" stroke="#d6d6d6" stroke-width="1" />
<line x1="17.7" y1="344.97999999999996" x2="756.8" y2="344.97999999999996" stroke="#e0e0e0" stroke-width="1" />
<line x1="0" y1="344.97999999999996" x2="17.7" y2="344.97999999999996" stroke="#d6d6d6" stroke-width="1" />
<line x1="17.7" y1="356.59999999999997" x2="756.8" y2="356.59999999999997" stroke="#e0e0e0" stroke-width="1" />
<line x1="0" y1="356.59999999999997" x2="17.7" y2="356.59999999999997" stroke="#d6d6d6" stroke-width="1" />
<line x1="17.7" y1="368.21999999999997" x2="756.8" y2="368.21999999999997" stroke="#e0e0e0" stroke-width="1" />
<line x1="0" y1="368.21999999999997" x2="17.7" y2="368.21999999999997" stroke="#d6d6d6" stroke-width="1" />
<line x1="17.7" y1="379.84" x2="756.8" y2="379.84" stroke="#e0e0e0" stroke-width="1" />
<line x1="0" y1="379.84" x2="17.7" y2="379.84" stroke="#d6d6d6" stroke-width="1" />
<line x1="17.7" y1="391.46" x2="756.8" y2="391.46" stroke="#e0e0e0" stroke-width="1" />
<line x1="0" y1="391.46" x2="17.7" y2="391.46" stroke="#d6d6d6" stroke-width="1" />
<line x1="17.7" y1="403.08" x2="756.8" y2="403.08" stroke="#e0e0e0" stroke-width="1" />
<line x1="0" y1="403.08" x2="17.7" y2="403.08" stroke="#d6d6d6" stroke-width="1" />
<line x1="68.4" y1="124.2" x2="68.4" y2="405.2" stroke="#e0e0e0" stroke-width="1" />
<line x1="68.4" y1="113.0" x2="68.4" y2="124.2" stroke="#d2d2d2" stroke-width="1" />
<line x1="106.8" y1="124.2" x2="106.8" y2="405.2" stroke="#e0e0e0" stroke-width="1" />
<line x1="106.8" y1="113.0" x2="106.8" y2="124.2" stroke="#d2d2d2" stroke-width="1" />
<line x1="145.2" y1="124.2" x2="145.2" y2="405.2" stroke="#e0e0e0" stroke-width="1" />
<line x1="145.2" y1="113.0" x2="145.2" y2="124.2" stroke="#d2d2d2" stroke-width="1" />
<line x1="183.6" y1="124.2" x2="183.6" y2="405.2" stroke="#e0e0e0" stroke-width="1" />
<line x1="183.6" y1="113.0" x2="183.6" y2="124.2" stroke="#d2d2d2" stroke-width="1" />
<line x1="222.0" y1="124.2" x2="222.0" y2="405.2" stroke="#e0e0e0" stroke-width="1" />
<line x1="222.0" y1="113.0" x2="222.0" y2="124.2" stroke="#d2d2d2" stroke-width="1" />
<line x1="260.4" y1="124.2" x2="260.4" y2="405.2" stroke="#e0e0e0" stroke-width="1" />
<line x1="260.4" y1="113.0" x2="260.4" y2="124.2" stroke="#d2d2d2" stroke-width="1" />
<line x1="298.8" y1="124.2" x2="298.8" y2="405.2" stroke="#e0e0e0" stroke-width="1" />
<line x1="298.8" y1="113.0" x2="298.8" y2="124.2" stroke="#d2d2d2" stroke-width="1" />
<line x1="337.2" y1="124.2" x2="337.2" y2="405.2" stroke="#e0e0e0" stroke-width="1" />
<line x1="337.2" y1="113.0" x2="337.2" y2="124.2" stroke="#d2d2d2" stroke-width="1" />
<line x1="375.6" y1="124.2" x2="375.6" y2="405.2" stroke="#e0e0e0" stroke-width="1" />
<line x1="375.6" y1="113.0" x2="375.6" y2="124.2" stroke="#d2d2d2" stroke-width="1" />
<line x1="414.0" y1="124.2" x2="414.0" y2="405.2" stroke="#e0e0e0" stroke-width="1" />
<line x1="414.0" y1="113.0" x2="414.0" y2="124.2" stroke="#d2d2d2" stroke-width="1" />
<line x1="452.4" y1="124.2" x2="452.4" y2="405.2" stroke="#e0e0e0" stroke-width="1" />
<line x1="452.4" y1="113.0" x2="452.4" y2="124.2" stroke="#d2d2d2" stroke-width="1" />
<line x1="490.8" y1="124.2" x2="490.8" y2="405.2" stroke="#e0e0e0" stroke-width="1" />
<line x1="490.8" y1="113.0" x2="490.8" y2="124.2" stroke="#d2d2d2" stroke-width="1" />
<line x1="529.1999999999999" y1="124.2" x2="529.1999999999999" y2="405.2" stroke="#e0e0e0" stroke-width="1" />
<line x1="529.1999999999999" y1="113.0" x2="529.1999999999999" y2="124.2" stroke="#d2d2d2" stroke-width="1" />
<line x1="567.5999999999999" y1="124.2" x2="567.5999999999999" y2="405.2" stroke="#e0e0e0" stroke-width="1" />
<line x1="567.5999999999999" y1="113.0" x2="567.5999999999999" y2="124.2" stroke="#d2d2d2" stroke-width="1" />
<line x1="606.0" y1="124.2" x2="606.0" y2="405.2" stroke="#e0e0e0" stroke-width="1" />
<line x1="606.0" y1="113.0" x2="606.0" y2="124.2" stroke="#d2d2d2" stroke-width="1" />
<line x1="644.4" y1="124.2" x2="644.4" y2="405.2" stroke="#e0e0e0" stroke-width="1" />
<line x1="644.4" y1="113.0" x2="644.4" y2="124.2" stroke="#d2d2d2" stroke-width="1" />
<line x1="682.8" y1="124.2" x2="682.8" y2="405.2" stroke="#e0e0e0" stroke-width="1" />
<line x1="682.8" y1="113.0" x2="682.8" y2="124.2" stroke="#d2d2d2" stroke-width="1" />
<line x1="721.1999999999999" y1="124.2" x2="721.1999999999999" y2="405.2" stroke="#e0e0e0" stroke-width="1" />
<line x1="721.1999999999999" y1="113.0" x2="721.1999999999999" y2="124.2" stroke="#d2d2d2" stroke-width="1" />
<line x1="759.5999999999999" y1="124.2" x2="759.5999999999999" y2="405.2" stroke="#e0e0e0" stroke-width="1" />
<line x1="759.5999999999999" y1="113.0" x2="759.5999999999999" y2="124.2" stroke="#d2d2d2" stroke-width="1" />
<line x1="17.7" y1="113.0" x2="17.7" y2="405.2" stroke="#cacaca" stroke-width="1" />
<line x1="0" y1="124.2" x2="756.8" y2="124.2" stroke="#cacaca" stroke-width="1" />
<path d="M8 122.7 L16 122.7 L16 114.6 Z" fill="#b8b8b8"/>
<text x="43.05" y="121.70" font-size="7.9" fill="#333333" stroke="#333333" stroke-width="0.04" text-anchor="middle">A</text>
<text x="87.60" y="121.70" font-size="7.9" fill="#333333" stroke="#333333" stroke-width="0.04" text-anchor="middle">B</text>
<text x="126.00" y="121.70" font-size="7.9" fill="#333333" stroke="#333333" stroke-width="0.04" text-anchor="middle">C</text>
<text x="164.40" y="121.70" font-size="7.9" fill="#333333" stroke="#333333" stroke-width="0.04" text-anchor="middle">D</text>
<text x="202.80" y="121.70" font-size="7.9" fill="#333333" stroke="#333333" stroke-width="0.04" text-anchor="middle">E</text>
<text x="241.20" y="121.70" font-size="7.9" fill="#333333" stroke="#333333" stroke-width="0.04" text-anchor="middle">F</text>
<text x="279.60" y="121.70" font-size="7.9" fill="#333333" stroke="#333333" stroke-width="0.04" text-anchor="middle">G</text>
<text x="318.00" y="121.70" font-size="7.9" fill="#333333" stroke="#333333" stroke-width="0.04" text-anchor="middle">H</text>
<text x="356.40" y="121.70" font-size="7.9" fill="#333333" stroke="#333333" stroke-width="0.04" text-anchor="middle">I</text>
<text x="394.80" y="121.70" font-size="7.9" fill="#333333" stroke="#333333" stroke-width="0.04" text-anchor="middle">J</text>
<text x="433.20" y="121.70" font-size="7.9" fill="#333333" stroke="#333333" stroke-width="0.04" text-anchor="middle">K</text>
<text x="471.60" y="121.70" font-size="7.9" fill="#333333" stroke="#333333" stroke-width="0.04" text-anchor="middle">L</text>
<text x="510.00" y="121.70" font-size="7.9" fill="#333333" stroke="#333333" stroke-width="0.04" text-anchor="middle">M</text>
<text x="548.40" y="121.70" font-size="7.9" fill="#333333" stroke="#333333" stroke-width="0.04" text-anchor="middle">N</text>
<text x="586.80" y="121.70" font-size="7.9" fill="#333333" stroke="#333333" stroke-width="0.04" text-anchor="middle">O</text>
<text x="625.20" y="121.70" font-size="7.9" fill="#333333" stroke="#333333" stroke-width="0.04" text-anchor="middle">P</text>
<text x="663.60" y="121.70" font-size="7.9" fill="#333333" stroke="#333333" stroke-width="0.04" text-anchor="middle">Q</text>
<text x="702.00" y="121.70" font-size="7.9" fill="#333333" stroke="#333333" stroke-width="0.04" text-anchor="middle">R</text>
<text x="740.40" y="121.70" font-size="7.9" fill="#333333" stroke="#333333" stroke-width="0.04" text-anchor="middle">S</text>
<text x="8.70" y="133.02" font-size="8.0" fill="#333333" stroke="#333333" stroke-width="0.04" text-anchor="middle">2</text>
<text x="8.70" y="144.64" font-size="8.0" fill="#333333" stroke="#333333" stroke-width="0.04" text-anchor="middle">3</text>
<text x="8.70" y="156.26" font-size="8.0" fill="#333333" stroke="#333333" stroke-width="0.04" text-anchor="middle">4</text>
<text x="8.70" y="167.88" font-size="8.0" fill="#333333" stroke="#333333" stroke-width="0.04" text-anchor="middle">5</text>
<text x="8.70" y="179.50" font-size="8.0" fill="#333333" stroke="#333333" stroke-width="0.04" text-anchor="middle">6</text>
<text x="8.70" y="191.12" font-size="8.0" fill="#333333" stroke="#333333" stroke-width="0.04" text-anchor="middle">7</text>
<text x="8.70" y="202.74" font-size="8.0" fill="#333333" stroke="#333333" stroke-width="0.04" text-anchor="middle">8</text>
<text x="8.70" y="214.36" font-size="8.0" fill="#333333" stroke="#333333" stroke-width="0.04" text-anchor="middle">9</text>
<text x="8.70" y="225.98" font-size="8.0" fill="#333333" stroke="#333333" stroke-width="0.04" text-anchor="middle">10</text>
<text x="8.70" y="237.60" font-size="8.0" fill="#333333" stroke="#333333" stroke-width="0.04" text-anchor="middle">11</text>
<text x="8.70" y="249.22" font-size="8.0" fill="#333333" stroke="#333333" stroke-width="0.04" text-anchor="middle">12</text>
<text x="8.70" y="260.84" font-size="8.0" fill="#333333" stroke="#333333" stroke-width="0.04" text-anchor="middle">13</text>
<text x="8.70" y="272.46" font-size="8.0" fill="#333333" stroke="#333333" stroke-width="0.04" text-anchor="middle">14</text>
<text x="8.70" y="284.08" font-size="8.0" fill="#333333" stroke="#333333" stroke-width="0.04" text-anchor="middle">15</text>
<text x="8.70" y="295.70" font-size="8.0" fill="#333333" stroke="#333333" stroke-width="0.04" text-anchor="middle">16</text>
<text x="8.70" y="307.32" font-size="8.0" fill="#333333" stroke="#333333" stroke-width="0.04" text-anchor="middle">17</text>
<text x="8.70" y="318.94" font-size="8.0" fill="#333333" stroke="#333333" stroke-width="0.04" text-anchor="middle">18</text>
<text x="8.70" y="330.56" font-size="8.0" fill="#333333" stroke="#333333" stroke-width="0.04" text-anchor="middle">19</text>
<text x="8.70" y="342.18" font-size="8.0" fill="#333333" stroke="#333333" stroke-width="0.04" text-anchor="middle">20</text>
<text x="8.70" y="353.80" font-size="8.0" fill="#333333" stroke="#333333" stroke-width="0.04" text-anchor="middle">21</text>
<text x="8.70" y="365.42" font-size="8.0" fill="#333333" stroke="#333333" stroke-width="0.04" text-anchor="middle">22</text>
<text x="8.70" y="377.04" font-size="8.0" fill="#333333" stroke="#333333" stroke-width="0.04" text-anchor="middle">23</text>
<text x="8.70" y="388.66" font-size="8.0" fill="#333333" stroke="#333333" stroke-width="0.04" text-anchor="middle">24</text>
<text x="8.70" y="400.28" font-size="8.0" fill="#333333" stroke="#333333" stroke-width="0.04" text-anchor="middle">25</text>
<text x="18.90" y="133.02" font-size="8.2" fill="#262626" stroke="#262626" stroke-width="0.05">January</text>
<text x="105.30" y="133.02" font-size="8.2" fill="#262626" stroke="#262626" stroke-width="0.05" text-anchor="end">2000</text>
<text x="18.90" y="144.64" font-size="8.2" fill="#262626" stroke="#262626" stroke-width="0.05">February</text>
<text x="105.30" y="144.64" font-size="8.2" fill="#262626" stroke="#262626" stroke-width="0.05" text-anchor="end">4000</text>
<text x="18.90" y="156.26" font-size="8.2" fill="#262626" stroke="#262626" stroke-width="0.05">March</text>
<text x="105.30" y="156.26" font-size="8.2" fill="#262626" stroke="#262626" stroke-width="0.05" text-anchor="end">17000</text>
<text x="18.90" y="167.88" font-size="8.2" fill="#262626" stroke="#262626" stroke-width="0.05">April</text>
<text x="105.30" y="167.88" font-size="8.2" fill="#262626" stroke="#262626" stroke-width="0.05" text-anchor="end">13000</text>
<text x="18.90" y="179.50" font-size="8.2" fill="#262626" stroke="#262626" stroke-width="0.05">May</text>
<text x="105.30" y="179.50" font-size="8.2" fill="#262626" stroke="#262626" stroke-width="0.05" text-anchor="end">12000</text>
<text x="18.90" y="191.12" font-size="8.2" fill="#262626" stroke="#262626" stroke-width="0.05">June</text>
<text x="105.30" y="191.12" font-size="8.2" fill="#262626" stroke="#262626" stroke-width="0.05" text-anchor="end">6000</text>
<text x="18.90" y="202.74" font-size="8.2" fill="#262626" stroke="#262626" stroke-width="0.05">July</text>
<text x="105.30" y="202.74" font-size="8.2" fill="#262626" stroke="#262626" stroke-width="0.05" text-anchor="end">9000</text>
<text x="18.90" y="214.36" font-size="8.2" fill="#262626" stroke="#262626" stroke-width="0.05">August</text>
<text x="105.30" y="214.36" font-size="8.2" fill="#262626" stroke="#262626" stroke-width="0.05" text-anchor="end">3500</text>
<text x="18.90" y="225.98" font-size="8.2" fill="#262626" stroke="#262626" stroke-width="0.05">September</text>
<text x="105.30" y="225.98" font-size="8.2" fill="#262626" stroke="#262626" stroke-width="0.05" text-anchor="end">5500</text>
<text x="18.90" y="237.60" font-size="8.2" fill="#262626" stroke="#262626" stroke-width="0.05">October</text>
<text x="105.30" y="237.60" font-size="8.2" fill="#262626" stroke="#262626" stroke-width="0.05" text-anchor="end">7000</text>
<text x="18.90" y="249.22" font-size="8.2" fill="#262626" stroke="#262626" stroke-width="0.05">November</text>
<text x="105.30" y="249.22" font-size="8.2" fill="#262626" stroke="#262626" stroke-width="0.05" text-anchor="end">9000</text>
<text x="18.90" y="260.84" font-size="8.2" fill="#262626" stroke="#262626" stroke-width="0.05">December</text>
<text x="105.30" y="260.84" font-size="8.2" fill="#262626" stroke="#262626" stroke-width="0.05" text-anchor="end">10000</text>
<line x1="68.4" y1="124.2" x2="68.4" y2="263.64" stroke="#9b7fd0" stroke-width="1.2" />
<line x1="17.7" y1="263.64" x2="68.4" y2="263.64" stroke="#9b7fd0" stroke-width="1.2" />
<line x1="106.8" y1="124.2" x2="106.8" y2="263.64" stroke="#6b9bd8" stroke-width="1.2" />
<line x1="68.4" y1="263.64" x2="106.8" y2="263.64" stroke="#6b9bd8" stroke-width="1.2" />
<rect x="16.9" y="123.4" width="1.8" height="1.8" fill="#9b7fd0" />
<rect x="67.6" y="123.4" width="1.8" height="1.8" fill="#9b7fd0" />
<rect x="67.6" y="262.8" width="1.8" height="1.8" fill="#9b7fd0" />
<rect x="16.9" y="262.8" width="1.8" height="1.8" fill="#9b7fd0" />
<rect x="105.9" y="123.4" width="1.8" height="1.8" fill="#6b9bd8" />
<rect x="105.9" y="262.8" width="1.8" height="1.8" fill="#6b9bd8" />
<rect x="158.3" y="136.6" width="446.59999999999997" height="240.20000000000002" fill="#ffffff" stroke="#a3a3a3" stroke-width="1.2" />
<text x="343.00" y="152.60" font-size="10.2" fill="#595959" stroke="#595959" stroke-width="0.06" textLength="75.90" lengthAdjust="spacingAndGlyphs">Chris' Shop Sales</text>
<line x1="188.1" y1="357.5" x2="591.7" y2="357.5" stroke="#d9d9d9" stroke-width="1" />
<text x="181.10" y="359.90" font-size="6.6" fill="#595959" stroke="#595959" stroke-width="0.05" text-anchor="end">0</text>
<text x="181.10" y="338.56" font-size="6.6" fill="#595959" stroke="#595959" stroke-width="0.05" text-anchor="end">2000</text>
<text x="181.10" y="317.21" font-size="6.6" fill="#595959" stroke="#595959" stroke-width="0.05" text-anchor="end">4000</text>
<text x="181.10" y="295.87" font-size="6.6" fill="#595959" stroke="#595959" stroke-width="0.05" text-anchor="end">6000</text>
<text x="181.10" y="274.52" font-size="6.6" fill="#595959" stroke="#595959" stroke-width="0.05" text-anchor="end">8000</text>
<text x="181.10" y="253.18" font-size="6.6" fill="#595959" stroke="#595959" stroke-width="0.05" text-anchor="end">10000</text>
<text x="181.10" y="231.84" font-size="6.6" fill="#595959" stroke="#595959" stroke-width="0.05" text-anchor="end">12000</text>
<text x="181.10" y="210.49" font-size="6.6" fill="#595959" stroke="#595959" stroke-width="0.05" text-anchor="end">14000</text>
<text x="181.10" y="189.15" font-size="6.6" fill="#595959" stroke="#595959" stroke-width="0.05" text-anchor="end">16000</text>
<text x="181.10" y="167.80" font-size="6.6" fill="#595959" stroke="#595959" stroke-width="0.05" text-anchor="end">18000</text>
<text x="188.10" y="369.50" font-size="6.6" fill="#595959" stroke="#595959" stroke-width="0.05" text-anchor="middle">0</text>
<text x="245.81" y="369.50" font-size="6.6" fill="#595959" stroke="#595959" stroke-width="0.05" text-anchor="middle">2</text>
<text x="303.53" y="369.50" font-size="6.6" fill="#595959" stroke="#595959" stroke-width="0.05" text-anchor="middle">4</text>
<text x="361.24" y="369.50" font-size="6.6" fill="#595959" stroke="#595959" stroke-width="0.05" text-anchor="middle">6</text>
<text x="418.96" y="369.50" font-size="6.6" fill="#595959" stroke="#595959" stroke-width="0.05" text-anchor="middle">8</text>
<text x="476.67" y="369.50" font-size="6.6" fill="#595959" stroke="#595959" stroke-width="0.05" text-anchor="middle">10</text>
<text x="534.38" y="369.50" font-size="6.6" fill="#595959" stroke="#595959" stroke-width="0.05" text-anchor="middle">12</text>
<text x="592.10" y="369.50" font-size="6.6" fill="#595959" stroke="#595959" stroke-width="0.05" text-anchor="middle">14</text>
<line x1="216.957" y1="270.96085872000003" x2="534.384" y2="269.72941664" stroke="#5b9bd5" stroke-width="1.6" stroke-dasharray="3.8 1.3"/>
<path d="M216.96 336.16 C221.77 332.60 239.73 331.69 245.81 314.81 C255.43 288.13 265.05 192.08 274.67 176.08 C284.29 160.07 293.91 209.87 303.53 218.76 C313.15 227.66 322.98 217.26 332.38 229.44 C342.00 241.89 351.62 288.13 361.24 293.47 C370.86 298.80 380.48 257.01 390.10 261.45 C399.72 265.90 409.34 313.92 418.96 320.15 C428.58 326.37 438.19 305.03 447.81 298.80 C457.43 292.58 467.05 289.02 476.67 282.80 C486.29 276.57 495.91 266.79 505.53 261.45 C515.15 256.12 529.57 252.56 534.38 250.78" fill="none" stroke="#5b9bd5" stroke-width="2.1" stroke-linecap="round"/>
<circle cx="216.96" cy="336.16" r="2.3" fill="#ffffff"/>
<circle cx="216.96" cy="336.16" r="1.6" fill="#5b9bd5"/>
<circle cx="245.81" cy="314.81" r="2.3" fill="#ffffff"/>
<circle cx="245.81" cy="314.81" r="1.6" fill="#5b9bd5"/>
<circle cx="274.67" cy="176.08" r="2.3" fill="#ffffff"/>
<circle cx="274.67" cy="176.08" r="1.6" fill="#5b9bd5"/>
<circle cx="303.53" cy="218.76" r="2.3" fill="#ffffff"/>
<circle cx="303.53" cy="218.76" r="1.6" fill="#5b9bd5"/>
<circle cx="332.38" cy="229.44" r="2.3" fill="#ffffff"/>
<circle cx="332.38" cy="229.44" r="1.6" fill="#5b9bd5"/>
<circle cx="361.24" cy="293.47" r="2.3" fill="#ffffff"/>
<circle cx="361.24" cy="293.47" r="1.6" fill="#5b9bd5"/>
<circle cx="390.10" cy="261.45" r="2.3" fill="#ffffff"/>
<circle cx="390.10" cy="261.45" r="1.6" fill="#5b9bd5"/>
<circle cx="418.96" cy="320.15" r="2.3" fill="#ffffff"/>
<circle cx="418.96" cy="320.15" r="1.6" fill="#5b9bd5"/>
<circle cx="447.81" cy="298.80" r="2.3" fill="#ffffff"/>
<circle cx="447.81" cy="298.80" r="1.6" fill="#5b9bd5"/>
<circle cx="476.67" cy="282.80" r="2.3" fill="#ffffff"/>
<circle cx="476.67" cy="282.80" r="1.6" fill="#5b9bd5"/>
<circle cx="505.53" cy="261.45" r="2.3" fill="#ffffff"/>
<circle cx="505.53" cy="261.45" r="1.6" fill="#5b9bd5"/>
<circle cx="534.38" cy="250.78" r="2.3" fill="#ffffff"/>
<circle cx="534.38" cy="250.78" r="1.6" fill="#5b9bd5"/>
<text x="224.16" y="339.56" font-size="6.5" fill="#404040" stroke="#404040" stroke-width="0.05">2000</text>
<text x="253.01" y="318.21" font-size="6.5" fill="#404040" stroke="#404040" stroke-width="0.05">4000</text>
<text x="281.87" y="179.48" font-size="6.5" fill="#404040" stroke="#404040" stroke-width="0.05">17000</text>
<text x="310.73" y="222.16" font-size="6.5" fill="#404040" stroke="#404040" stroke-width="0.05">13000</text>
<text x="339.58" y="232.84" font-size="6.5" fill="#404040" stroke="#404040" stroke-width="0.05">12000</text>
<text x="368.44" y="296.87" font-size="6.5" fill="#404040" stroke="#404040" stroke-width="0.05">6000</text>
<text x="397.30" y="264.85" font-size="6.5" fill="#404040" stroke="#404040" stroke-width="0.05">9000</text>
<text x="426.16" y="323.55" font-size="6.5" fill="#404040" stroke="#404040" stroke-width="0.05">3500</text>
<text x="455.01" y="302.20" font-size="6.5" fill="#404040" stroke="#404040" stroke-width="0.05">5500</text>
<text x="483.87" y="286.20" font-size="6.5" fill="#404040" stroke="#404040" stroke-width="0.05">7000</text>
<text x="512.73" y="264.85" font-size="6.5" fill="#404040" stroke="#404040" stroke-width="0.05">9000</text>
<text x="541.58" y="254.18" font-size="6.5" fill="#404040" stroke="#404040" stroke-width="0.05">10000</text>
<text x="545.20" y="271.80" font-size="6.6" fill="#595959" stroke="#595959" stroke-width="0.03" textLength="55.70" lengthAdjust="spacingAndGlyphs">y = 10.49x + 8098.5</text>
<circle cx="158.30" cy="136.60" r="2.9" fill="#ffffff" stroke="#8a8a8a" stroke-width="1.05"/>
<circle cx="158.30" cy="256.70" r="2.9" fill="#ffffff" stroke="#8a8a8a" stroke-width="1.05"/>
<circle cx="158.30" cy="376.80" r="2.9" fill="#ffffff" stroke="#8a8a8a" stroke-width="1.05"/>
<circle cx="381.60" cy="136.60" r="2.9" fill="#ffffff" stroke="#8a8a8a" stroke-width="1.05"/>
<circle cx="381.60" cy="376.80" r="2.9" fill="#ffffff" stroke="#8a8a8a" stroke-width="1.05"/>
<circle cx="604.90" cy="136.60" r="2.9" fill="#ffffff" stroke="#8a8a8a" stroke-width="1.05"/>
<circle cx="604.90" cy="256.70" r="2.9" fill="#ffffff" stroke="#8a8a8a" stroke-width="1.05"/>
<circle cx="604.90" cy="376.80" r="2.9" fill="#ffffff" stroke="#8a8a8a" stroke-width="1.05"/>
<rect x="608.5" y="136.3" width="16.2" height="16.2" fill="none" stroke="#d4d4d4" stroke-width="0.8" />
<rect x="608.5" y="159.3" width="16.2" height="16.2" fill="none" stroke="#d4d4d4" stroke-width="0.8" />
<rect x="608.5" y="182.3" width="16.2" height="16.2" fill="none" stroke="#d4d4d4" stroke-width="0.8" />
<rect x="612.2" y="143.3" width="7.8" height="2.4" fill="#7db99c" />
<rect x="614.9" y="140.6" width="2.4" height="7.8" fill="#7db99c" />
<path d="M620.6 163.2 L616.6 168.4" stroke="#8a8a8a" stroke-width="1.1" fill="none"/>
<path d="M615.6 167.4 L617.6 169.2 Q616.2 171.8 611.8 172.4 Q613.2 169.2 615.6 167.4 Z" fill="#5b9bd5"/>
<path d="M611 185.6 L622 185.6 L617.6 190.6 L617.6 195.6 L615.4 195.6 L615.4 190.6 Z" fill="#9a9a9a"/>
<rect x="756.8" y="113" width="11.2" height="292.2" fill="#e6e6e6" />
<rect x="757.2" y="113.6" width="9.5" height="9" fill="#ffffff" />
<path d="M759.7 119.8 L764.2 119.8 L762 117.3 Z" fill="#777"/>
<rect x="757.2" y="122.6" width="9.5" height="11.8" fill="#d9d9d9" />
<rect x="757.2" y="134.4" width="9.5" height="261.6" fill="#ffffff" />
<rect x="757.2" y="396" width="9.5" height="9" fill="#ffffff" />
<line x1="757.2" y1="395.8" x2="766.7" y2="395.8" stroke="#e3e3e3" stroke-width="0.6" />
<path d="M759.7 400 L764.2 400 L762 402.5 Z" fill="#777"/>
<rect x="0" y="405.2" width="768" height="13" fill="#e6e6e6" />
<line x1="0" y1="405.7" x2="768" y2="405.7" stroke="#c6c6c6" stroke-width="1" />
<rect x="47.6" y="405.2" width="35.1" height="12.3" fill="#ffffff" />
<rect x="47.6" y="416.2" width="35.1" height="1.6" fill="#217346" />
<text x="52.10" y="413.90" font-size="7.8" fill="#217346" stroke="#217346" stroke-width="0.06" font-weight="bold" textLength="25.40" lengthAdjust="spacingAndGlyphs">Sheet1</text>
<circle cx="103.2" cy="412.1" r="3.8" fill="none" stroke="#777" stroke-width="0.9"/>
<line x1="101" y1="412.1" x2="105.4" y2="412.1" stroke="#777" stroke-width="0.9" />
<line x1="103.2" y1="409.9" x2="103.2" y2="414.3" stroke="#777" stroke-width="0.9" />
<path d="M14.6 410 L13 412 L14.6 414" fill="none" stroke="#bdbdbd" stroke-width="0.7"/>
<path d="M26.4 410 L28 412 L26.4 414" fill="none" stroke="#bdbdbd" stroke-width="0.7"/>
<rect x="459.6" y="408.6" width="1.1" height="0.9" fill="#9a9a9a" />
<rect x="459.6" y="411.1" width="1.1" height="0.9" fill="#9a9a9a" />
<rect x="459.6" y="413.6" width="1.1" height="0.9" fill="#9a9a9a" />
<rect x="467.5" y="406.4" width="9.5" height="10" fill="#ffffff" />
<path d="M470.5 411.4 L473.5 409 L473.5 413.8 Z" fill="#555"/>
<rect x="477" y="406.4" width="254.4" height="10" fill="#ffffff" />
<line x1="477.2" y1="406.4" x2="477.2" y2="416.4" stroke="#d6d6d6" stroke-width="0.6" />
<rect x="731.4" y="406.4" width="15.4" height="10" fill="#dadada" />
<rect x="746.8" y="406.4" width="9.5" height="10" fill="#ffffff" />
<path d="M753 411.4 L750 409 L750 413.8 Z" fill="#555"/>
<rect x="0" y="418.2" width="768" height="3.8" fill="#f2f2f2" />
<rect x="612" y="419" width="17.7" height="3" fill="#cfcfcf" />
<rect x="616.7" y="420.5" width="8.3" height="1.5" fill="#8a8a8a" />
<rect x="635" y="420.5" width="7.7" height="1.5" fill="#9a9a9a" />
<rect x="653" y="420.5" width="8" height="1.5" fill="#9a9a9a" />
</svg></body></html>
